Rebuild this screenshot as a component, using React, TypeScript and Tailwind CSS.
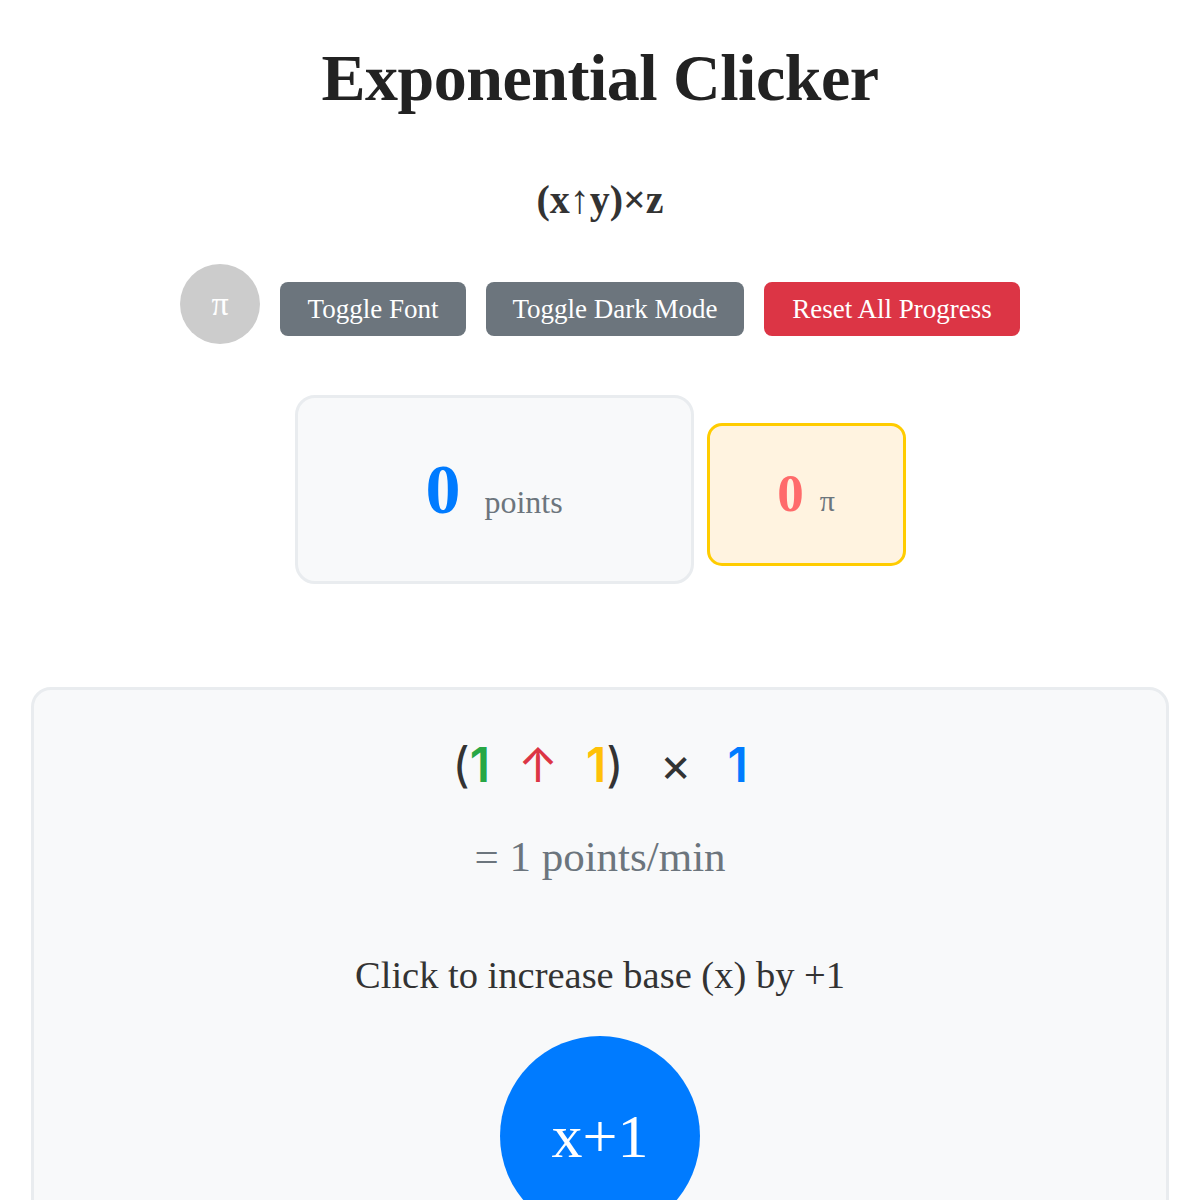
import React from 'react';

const serif = "font-['Liberation_Serif','DejaVu_Serif',serif]";

export default function App() {
  return (
    <div className={`min-h-screen bg-white ${serif} text-[#222]`}>
      <div className="flex flex-col items-center pt-[38px]">
        {/* Title */}
        <h1 className="text-[66px] leading-[80px] font-bold tracking-[-0.5px]">Exponential Clicker</h1>

        {/* Formula hint */}
        <div className="mt-[62px] text-[40px] leading-[40px] font-bold text-[#333]">(x↑y)×z</div>

        {/* Controls */}
        <div className="mt-[44px] flex items-start gap-5">
          <div className="w-20 h-20 rounded-full bg-[#cccccc] flex items-center justify-center text-white text-[34px] leading-none">π</div>
          <button className="mt-[18px] h-[54px] w-[186px] rounded-lg bg-[#6c757d] text-white text-[27px]">Toggle Font</button>
          <button className="mt-[18px] h-[54px] w-[258px] rounded-lg bg-[#6c757d] text-white text-[27px]">Toggle Dark Mode</button>
          <button className="mt-[18px] h-[54px] w-[256px] rounded-lg bg-[#dc3545] text-white text-[27px]">Reset All Progress</button>
        </div>

        {/* Stats */}
        <div className="mt-[51px] flex items-start gap-[13px]">
          <div className="w-[399px] h-[189px] rounded-[20px] border-[3px] border-[#e9ecef] bg-[#f8f9fa] flex items-baseline justify-center pt-[52px] gap-[24px]">
            <span className="text-[70px] leading-[80px] font-bold text-[#007bff]">0</span>
            <span className="text-[32px] text-[#6c757d]">points</span>
          </div>
          <div className="mt-[28px] w-[199px] h-[143px] rounded-[15px] border-[3px] border-[#ffcc00] bg-[#fff3e0] flex items-baseline justify-center pt-[32px] gap-[16px]">
            <span className="text-[53px] leading-[70px] font-bold text-[#ff6b6b]">0</span>
            <span className="text-[30px] text-[#6c757d]">π</span>
          </div>
        </div>
      </div>

      {/* Main panel */}
      <div className="mx-[31px] mt-[103px] h-[600px] rounded-[20px] border-[3px] border-[#e9ecef] bg-[#f8f9fa] flex flex-col items-center">
        <div className="mt-[40px] font-['Inter','Noto_Sans',sans-serif] text-[48px] leading-[70px] text-[#333] flex items-center">
          <span>(</span>
          <span className="text-[#28a745] font-semibold">1</span>
          <span className="text-[#dc3545] ml-[28px]">↑</span>
          <span className="text-[#ffc107] font-semibold ml-[28px]">1</span>
          <span>)</span>
          <span className="ml-[36px]">×</span>
          <span className="text-[#007bff] font-semibold ml-[36px]">1</span>
        </div>
        <div className="mt-[35px] text-[43px] leading-[44px] text-[#6c757d]">= 1 points/min</div>
        <div className="mt-[74px] text-[38.5px] leading-[44px] text-[#333]">Click to increase base (x) by +1</div>
        <button className="mt-[39px] w-[200px] h-[200px] rounded-full bg-[#007bff] text-white text-[62px]">x+1</button>
      </div>
    </div>
  );
}
